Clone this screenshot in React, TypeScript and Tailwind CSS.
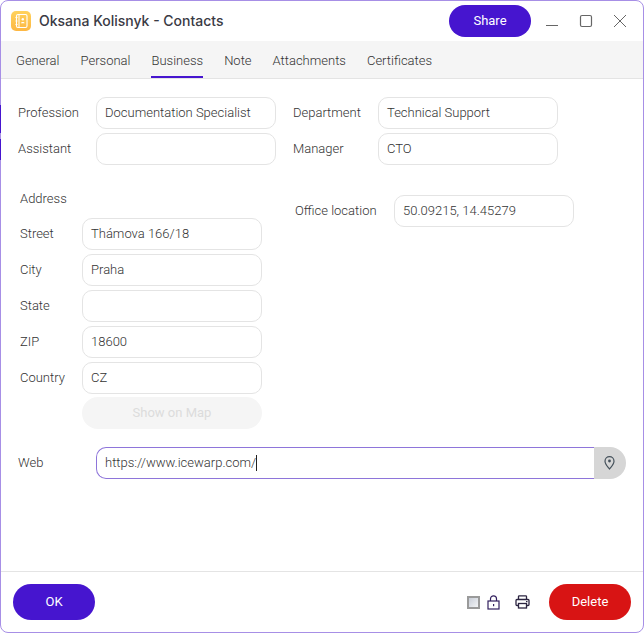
import React from "react";

const Field = ({ value = "", w = "w-[180px]" }: { value?: string; w?: string }) => (
  <div className={`${w} h-[32px] rounded-[10px] border border-[#e4e4e4] bg-white px-2 flex items-center text-[13px] font-light text-[#333] shrink-0`}>
    {value}
  </div>
);

const Label = ({ children, w }: { children: React.ReactNode; w: string }) => (
  <div className={`${w} text-[13px] font-light text-[#333] shrink-0`}>{children}</div>
);

const Row = ({ label, value }: { label: string; value: string }) => (
  <div className="flex items-center h-[32px]">
    <Label w="w-[62px]">{label}</Label>
    <Field value={value} />
  </div>
);

const tabs = ["General", "Personal", "Business", "Note", "Attachments", "Certificates"];

export default function App() {
  return (
    <div className="relative w-[644px] h-[633px] bg-white border border-[#a78fe6] rounded-[8px] flex flex-col font-['Roboto',sans-serif]">
      <div className="absolute left-[-1px] top-[104px] w-px h-[28px] bg-[#4615cf]" />
      <div className="absolute left-[-1px] top-[138px] w-px h-[21px] bg-[#4615cf]" />
      <div className="h-[40px] flex items-center pl-[10px] shrink-0">
        <svg width="20" height="20" viewBox="0 0 20 20">
          <defs>
            <linearGradient id="g" x1="0" y1="0" x2="0" y2="1">
              <stop offset="0" stopColor="#ffd25c" />
              <stop offset="1" stopColor="#fdb743" />
            </linearGradient>
          </defs>
          <rect width="20" height="20" rx="5" fill="url(#g)" />
          <rect x="5.5" y="3.5" width="10.5" height="13" rx="1.5" fill="none" stroke="#fff" strokeWidth="1.1" />
          <path d="M8 3.5v13" stroke="#fff" strokeWidth="1" />
          <path d="M4.5 6.5h2M4.5 10h2M4.5 13.5h2" stroke="#fff" strokeWidth="1" />
          <circle cx="11.8" cy="8.2" r="1.2" fill="#fff" />
          <path d="M10 12.2c0-1.6 3.6-1.6 3.6 0z" fill="#fff" />
        </svg>
        <div className="ml-[8px] text-[14px] font-medium font-['Inter',sans-serif] text-[#3a3a44] relative -top-px">Oksana Kolisnyk - Contacts</div>
        <div className="ml-auto flex items-center">
          <button className="w-[82px] h-[32px] rounded-full bg-[#4615cf] text-white text-[13px]">Share</button>
          <svg className="ml-[14px]" width="14" height="14" viewBox="0 0 14 14"><path d="M1 11.5h12" stroke="#666" strokeWidth="1" /></svg>
          <svg className="ml-[20px]" width="14" height="14" viewBox="0 0 14 14"><rect x="1.5" y="1.5" width="11" height="11" rx="1.5" fill="none" stroke="#666" strokeWidth="1.2" /></svg>
          <svg className="ml-[20px] mr-[16px]" width="14" height="14" viewBox="0 0 14 14"><path d="M1 1l12 12M13 1L1 13" stroke="#666" strokeWidth="1" /></svg>
        </div>
      </div>

      <div className="h-[38px] bg-[#f5f5f5] border-b border-[#e4e4e4] flex items-stretch pl-[15px] gap-[21px] shrink-0">
        {tabs.map((t) => (
          <div key={t} className={`flex items-center text-[13px] font-light text-[#333] border-b-2 pt-[5px] ${t === "Business" ? "border-[#4615cf]" : "border-transparent"}`}>
            {t}
          </div>
        ))}
      </div>

      <div className="flex-1 flex flex-col">
        <div className="pl-[17px] pt-[18px] flex flex-col gap-[4px]">
          <div className="flex items-center">
            <Label w="w-[78px]">Profession</Label>
            <Field value="Documentation Specialist" />
            <Label w="w-[85px] ml-[17px]">Department</Label>
            <Field value="Technical Support" />
          </div>
          <div className="flex items-center">
            <Label w="w-[78px]">Assistant</Label>
            <Field />
            <Label w="w-[85px] ml-[17px]">Manager</Label>
            <Field value="CTO" />
          </div>
        </div>

        <div className="flex pl-[19px] mt-[22px]">
          <div className="w-[275px] shrink-0 flex flex-col gap-[4px]">
            <div className="h-[23px] mb-[4px] flex items-center text-[13px] font-light text-[#333]">Address</div>
            <Row label="Street" value="Thámova 166/18" />
            <Row label="City" value="Praha" />
            <Row label="State" value="" />
            <Row label="ZIP" value="18600" />
            <Row label="Country" value="CZ" />
            <div className="ml-[62px] w-[180px] h-[32px] -mt-px rounded-full bg-[#f5f5f5] flex items-center justify-center text-[13px] text-[#dcdcdc]">Show on Map</div>
          </div>
          <div className="flex items-center h-[32px] mt-[8px]">
            <Label w="w-[99px]">Office location</Label>
            <Field value="50.09215, 14.45279" />
          </div>
        </div>

        <div className="flex items-center pl-[17px] mt-[18px]">
          <Label w="w-[78px]">Web</Label>
          <div className="w-[498px] h-[32px] rounded-l-[10px] border border-r-0 border-[#8e75da] bg-white px-2 flex items-center text-[13px] font-light text-[#333]">
            https://www.icewarp.com/<span className="inline-block w-px h-[16px] bg-[#222]" />
          </div>
          <div className="w-[32px] h-[32px] rounded-r-full bg-[#d6d6d6] flex items-center justify-center">
            <svg width="11" height="14" viewBox="0 0 11 14" className="mr-[2px]">
              <path d="M5.5 13C3.3 10.2 1 8 1 5.2a4.5 4.5 0 0 1 9 0C10 8 7.7 10.2 5.5 13z" fill="none" stroke="#44505a" strokeWidth="1.2" />
              <circle cx="5.5" cy="5" r="1.4" fill="#44505a" />
            </svg>
          </div>
        </div>
      </div>

      <div className="h-[61px] border-t border-[#e4e4e4] flex items-center pl-[12px] pr-[12px] shrink-0">
        <button className="w-[82px] h-[36px] rounded-full bg-[#4615cf] text-white text-[13px]">OK</button>
        <div className="ml-auto flex items-center">
          <div className="w-[13px] h-[13px] border-2 border-[#9a9a9a] bg-gradient-to-br from-[#c9ced8] to-[#f3f4f6]" />
          <svg className="ml-[7px]" width="13" height="15" viewBox="0 0 13 15">
            <rect x="1" y="6" width="11" height="8" fill="none" stroke="#33205f" strokeWidth="1.2" />
            <path d="M3.5 6V3.8a3 3 0 0 1 6 0V6" fill="none" stroke="#33205f" strokeWidth="1.2" />
            <rect x="6" y="9" width="1.2" height="2.2" fill="#33205f" />
          </svg>
          <svg className="ml-[15px]" width="15" height="14" viewBox="0 0 15 14">
            <path d="M3.5 4V1.6q0-.8.8-.8h6.4q.8 0 .8.8V4" fill="none" stroke="#2b2440" strokeWidth="1.3" />
            <path d="M3.5 10.5H2q-1 0-1-1V5.5q0-1 1-1h11q1 0 1 1v4q0 1-1 1h-1.5" fill="none" stroke="#2b2440" strokeWidth="1.3" />
            <rect x="3.5" y="8.5" width="8" height="4.5" fill="none" stroke="#2b2440" strokeWidth="1.3" />
            <rect x="11" y="6" width="1.5" height="1.2" fill="#2b2440" />
          </svg>
          <button className="ml-[19px] w-[82px] h-[36px] rounded-full bg-[#d81414] text-white text-[13px]">Delete</button>
        </div>
      </div>
    </div>
  );
}
